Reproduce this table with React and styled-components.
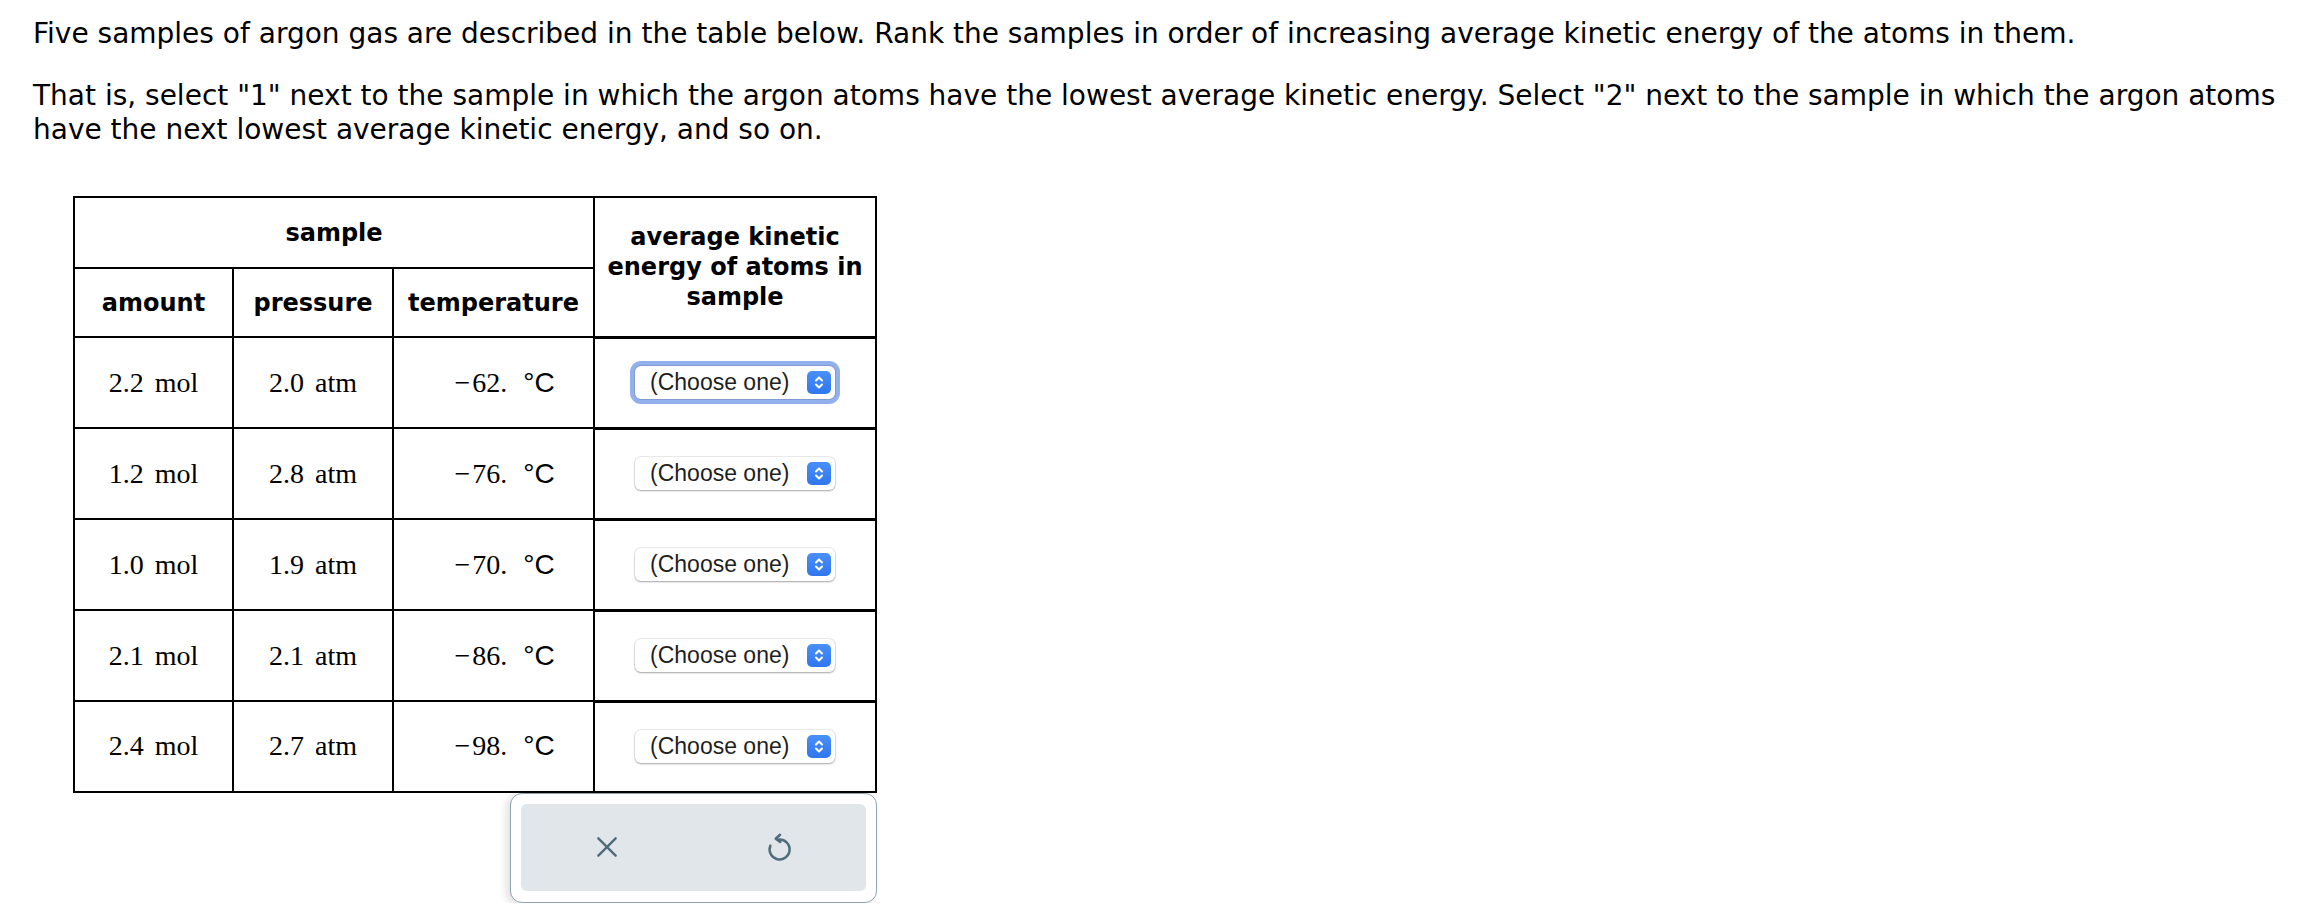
import React from 'react';
import styled, { createGlobalStyle } from 'styled-components';

const GlobalStyle = createGlobalStyle`
  body {
    margin: 0;
    background: #fff;
  }
`;

const Page = styled.div`
  padding: 17px 20px 0 33px;
  font-family: "DejaVu Sans", Verdana, sans-serif;
  color: #000;
`;

const Prompt = styled.p`
  margin: 0 0 ${(p) => p.$gap}px;
  font-size: 28px;
  line-height: 34px;
`;

const Layout = styled.div`
  display: inline-flex;
  flex-direction: column;
  margin: 49px 0 0 40px;
`;

const Table = styled.table`
  border-collapse: collapse;
  table-layout: fixed;
  width: 802px;
`;

const HeadCell = styled.th`
  border: 2px solid #000;
  ${(p) => p.$last && 'border-bottom-width: 3px;'}
  font-weight: bold;
  font-size: 24px;
  line-height: 30px;
  text-align: center;
  padding: 0 6px;
  height: ${(p) => p.$h}px;
  box-sizing: border-box;
`;

const Cell = styled.td`
  border: 2px solid #000;
  height: 88px;
  padding: 0;
  text-align: center;
  font-family: "Liberation Serif", "Times New Roman", serif;
  font-size: 28px;
  word-spacing: ${(p) => (p.$temp ? 9 : 4)}px;
  padding-left: ${(p) => (p.$temp ? 22 : 0)}px;
`;

const ChoiceCell = styled.td`
  border: 2px solid #000;
  border-top-width: 3px;
  height: 88px;
  padding: 0;
  text-align: center;
`;

const Minus = styled.span`
  margin-right: 2px;
`;

const Unit = styled.span`
  font-family: "Liberation Sans", Arial, sans-serif;
  word-spacing: 0;
`;

const Picker = styled.div`
  display: inline-flex;
  align-items: center;
  justify-content: space-between;
  width: 200px;
  height: 33px;
  box-sizing: border-box;
  padding: 0 4px 0 15px;
  background: #fff;
  border-radius: 6px;
  vertical-align: middle;
  font-family: "Liberation Sans", Arial, sans-serif;
  font-size: 23px;
  color: #1f1f1f;
  box-shadow: ${(p) =>
    p.$focused
      ? '0 0 0 1px rgba(0,0,0,0.12), 0 0 0 5px #93b0ee'
      : '0 0 0 1px rgba(0,0,0,0.07), 0 1px 2px rgba(0,0,0,0.3)'};
`;

const Stepper = styled.span`
  display: flex;
  align-items: center;
  justify-content: center;
  width: 24px;
  height: 23px;
  border-radius: 5px;
  background: linear-gradient(#4a90f8, #2f76f0);
`;

const Actions = styled.div`
  align-self: flex-end;
  width: 367px;
  height: 110px;
  box-sizing: border-box;
  padding: 10px 10px 11px;
  background: #fff;
  border: 1.5px solid #8fa3ad;
  border-radius: 12px;
  box-shadow: -4px 2px 8px rgba(0, 0, 0, 0.12);
`;

const ActionTray = styled.div`
  display: grid;
  grid-template-columns: 1fr 1fr;
  height: 100%;
  background: #e0e6e9;
  border-radius: 6px;
`;

const ActionButton = styled.button`
  display: flex;
  align-items: center;
  justify-content: center;
  border: none;
  background: none;
  padding: 0;
  cursor: pointer;
  color: #4e6c79;
`;

const rows = [
  { amount: '2.2 mol', pressure: '2.0 atm', temp: '62.' },
  { amount: '1.2 mol', pressure: '2.8 atm', temp: '76.' },
  { amount: '1.0 mol', pressure: '1.9 atm', temp: '70.' },
  { amount: '2.1 mol', pressure: '2.1 atm', temp: '86.' },
  { amount: '2.4 mol', pressure: '2.7 atm', temp: '98.' },
];

const StepIcon = () => (
  <svg width="12" height="17" viewBox="0 0 12 17" fill="none" stroke="#fff" strokeWidth="2" strokeLinecap="round" strokeLinejoin="round">
    <path d="M3 6.5l3-3 3 3" />
    <path d="M3 10.5l3 3 3-3" />
  </svg>
);

const CloseIcon = () => (
  <svg width="26" height="26" viewBox="0 0 24 24" fill="none" stroke="currentColor" strokeWidth="2.2" strokeLinecap="round">
    <path d="M4 4l16 16M20 4L4 20" />
  </svg>
);

const UndoIcon = () => (
  <svg width="30" height="30" viewBox="0 0 24 24" fill="none" stroke="currentColor" strokeWidth="2" strokeLinecap="round" strokeLinejoin="round">
    <path d="M11 6A8 8 0 1 1 4.3 10.9" />
    <path d="M12 2.2L8.6 5.4l3.6 2.6" />
  </svg>
);

export default function App() {
  return (
    <>
      <GlobalStyle />
      <Page>
        <Prompt $gap={28}>
          Five samples of argon gas are described in the table below. Rank the samples in order of increasing average
          kinetic energy of the atoms in them.
        </Prompt>
        <Prompt $gap={0}>
          That is, select "1" next to the sample in which the argon atoms have the lowest average kinetic energy. Select
          "2" next to the sample in which the argon atoms have the next lowest average kinetic energy, and so on.
        </Prompt>

        <Layout>
          <Table>
            <colgroup>
              <col style={{ width: 159 }} />
              <col style={{ width: 160 }} />
              <col style={{ width: 201 }} />
              <col style={{ width: 282 }} />
            </colgroup>
            <thead>
              <tr>
                <HeadCell colSpan={3} $h={71}>sample</HeadCell>
                <HeadCell rowSpan={2} $last>average kinetic energy of atoms in sample</HeadCell>
              </tr>
              <tr>
                <HeadCell $h={69}>amount</HeadCell>
                <HeadCell $h={69}>pressure</HeadCell>
                <HeadCell $h={69}>temperature</HeadCell>
              </tr>
            </thead>
            <tbody>
              {rows.map((row, i) => (
                <tr key={row.amount + row.temp}>
                  <Cell>{row.amount}</Cell>
                  <Cell>{row.pressure}</Cell>
                  <Cell $temp>
                    <Minus>−</Minus>
                    {row.temp} <Unit>°C</Unit>
                  </Cell>
                  <ChoiceCell>
                    <Picker $focused={i === 0} role="button" tabIndex={0}>
                      (Choose one)
                      <Stepper>
                        <StepIcon />
                      </Stepper>
                    </Picker>
                  </ChoiceCell>
                </tr>
              ))}
            </tbody>
          </Table>

          <Actions>
            <ActionTray>
              <ActionButton aria-label="Clear">
                <CloseIcon />
              </ActionButton>
              <ActionButton aria-label="Undo">
                <UndoIcon />
              </ActionButton>
            </ActionTray>
          </Actions>
        </Layout>
      </Page>
    </>
  );
}
